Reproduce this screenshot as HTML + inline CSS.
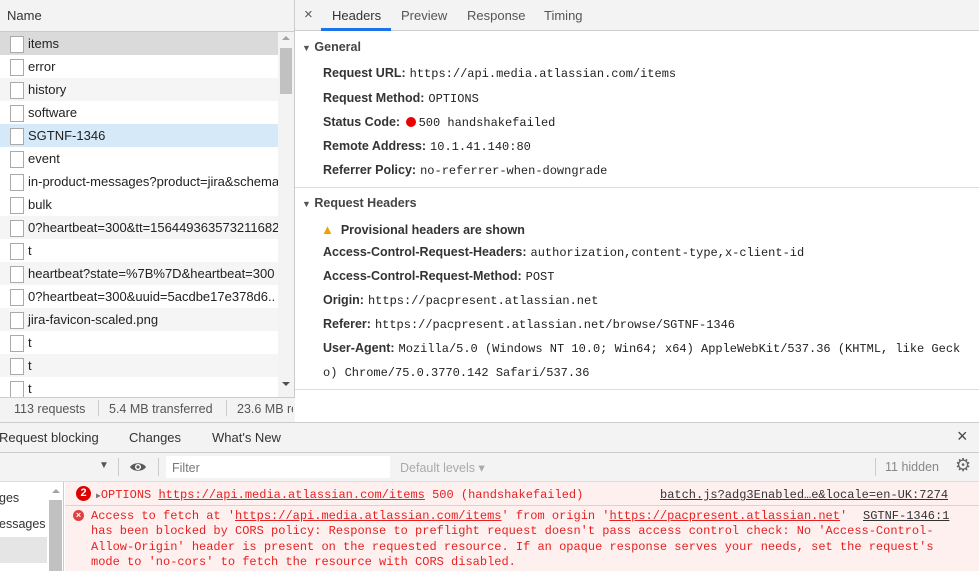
<!DOCTYPE html>
<html><head><meta charset="utf-8"><style>
*{margin:0;padding:0;box-sizing:border-box}
body{width:979px;height:571px;overflow:hidden;background:#fff;font-family:"Liberation Sans",sans-serif;font-size:12.5px;color:#333;position:relative}
.a{position:absolute;white-space:nowrap}
.mono{font-family:"Liberation Mono",monospace;font-size:12px}
.row{position:absolute;left:0;width:278px;height:23px;line-height:23px;padding-left:28px;color:#222;overflow:hidden;font-size:13px;white-space:nowrap}
.row:before{content:"";position:absolute;left:10px;top:4px;width:12px;height:15px;border:1px solid #aaa;background:#fff}
.g{background:#f5f5f5}
.k{position:absolute;left:323px;font-weight:bold;color:#333;white-space:nowrap}
.k span{font-weight:normal;font-family:"Liberation Mono",monospace;font-size:12px;color:#222;margin-left:4px}
.tab{position:absolute;top:0;height:31px;line-height:31px;color:#555;font-size:13px}
.err{color:#e52222}
.u{text-decoration:underline}
</style></head><body>
<div class="a" style="left:0;top:0;width:295px;height:32px;background:#f3f3f3;border-bottom:1px solid #ccc;border-right:1px solid #ccc"></div>
<div class="a" style="left:7px;top:8px;color:#333;font-size:13px">Name</div>
<div class="row" style="top:32px;background:#dadada">items</div>
<div class="row" style="top:55px">error</div>
<div class="row g" style="top:78px">history</div>
<div class="row" style="top:101px">software</div>
<div class="row" style="top:124px;background:#d6e9f8">SGTNF-1346</div>
<div class="row" style="top:147px">event</div>
<div class="row" style="top:170px">in-product-messages?product=jira&amp;schema</div>
<div class="row" style="top:193px">bulk</div>
<div class="row g" style="top:216px">0?heartbeat=300&amp;tt=1564493635732116826</div>
<div class="row" style="top:239px">t</div>
<div class="row g" style="top:262px">heartbeat?state=%7B%7D&amp;heartbeat=300</div>
<div class="row" style="top:285px">0?heartbeat=300&amp;uuid=5acdbe17e378d6..</div>
<div class="row g" style="top:308px">jira-favicon-scaled.png</div>
<div class="row" style="top:331px">t</div>
<div class="row g" style="top:354px">t</div>
<div class="row" style="top:377px;height:21px">t</div>
<div class="a" style="left:278px;top:32px;width:16px;height:366px;background:#f3f3f3"></div>
<div class="a" style="left:280px;top:48px;width:12px;height:46px;background:#c1c1c1"></div>
<div class="a" style="left:282px;top:36px;width:0;height:0;border:4px solid transparent;border-bottom-color:#a3a3a3;border-top:0"></div>
<div class="a" style="left:282px;top:382px;width:0;height:0;border:4px solid transparent;border-top-color:#505050;border-bottom:0"></div>
<div class="a" style="left:294px;top:0;width:1px;height:422px;background:#ccc"></div>
<div class="a" style="left:0;top:397px;width:295px;height:25px;background:#f3f3f3;border-top:1px solid #ccc"></div>
<div class="a" style="left:14px;top:402px;color:#555">113 requests</div>
<div class="a" style="left:98px;top:400px;width:1px;height:16px;background:#ccc"></div>
<div class="a" style="left:109px;top:402px;color:#555">5.4 MB transferred</div>
<div class="a" style="left:226px;top:400px;width:1px;height:16px;background:#ccc"></div>
<div class="a" style="left:237px;top:402px;color:#555;width:56px;overflow:hidden">23.6 MB resources</div>
<div class="a" style="left:295px;top:0;width:684px;height:31px;background:#f3f3f3;border-bottom:1px solid #ccc"></div>
<div class="a" style="left:304px;top:6px;font-size:15px;color:#555">×</div>
<div class="tab" style="left:332px;color:#333">Headers</div>
<div class="a" style="left:321px;top:28px;width:70px;height:3px;background:#1a73e8"></div>
<div class="tab" style="left:401px">Preview</div>
<div class="tab" style="left:467px">Response</div>
<div class="tab" style="left:544px">Timing</div>
<div class="a" style="left:302px;top:40px;font-weight:bold;color:#444"><span style="font-size:9px;color:#555">▼</span> General</div>
<div class="k" style="top:66px">Request URL:<span>https://api.media.atlassian.com/items</span></div>
<div class="k" style="top:91px">Request Method:<span>OPTIONS</span></div>
<div class="k" style="top:115px">Status Code: <i style="display:inline-block;width:10px;height:10px;border-radius:50%;background:#e00;vertical-align:-1px;margin-left:2px"></i><span style="margin-left:3px">500 handshakefailed</span></div>
<div class="k" style="top:139px">Remote Address:<span>10.1.41.140:80</span></div>
<div class="k" style="top:163px">Referrer Policy:<span>no-referrer-when-downgrade</span></div>
<div class="a" style="left:295px;top:187px;width:684px;height:1px;background:#ddd"></div>
<div class="a" style="left:302px;top:196px;font-weight:bold;color:#444"><span style="font-size:9px;color:#555">▼</span> Request Headers</div>
<div class="a" style="left:321px;top:222px;font-weight:bold;color:#333"><span style="color:#f0a000;font-size:13px">▲</span>&nbsp; Provisional headers are shown</div>
<div class="k" style="top:245px">Access-Control-Request-Headers:<span>authorization,content-type,x-client-id</span></div>
<div class="k" style="top:269px">Access-Control-Request-Method:<span>POST</span></div>
<div class="k" style="top:293px">Origin:<span>https://pacpresent.atlassian.net</span></div>
<div class="k" style="top:317px">Referer:<span>https://pacpresent.atlassian.net/browse/SGTNF-1346</span></div>
<div class="k" style="top:341px">User-Agent:<span>Mozilla/5.0 (Windows NT 10.0; Win64; x64) AppleWebKit/537.36 (KHTML, like Geck</span></div>
<div class="a mono" style="left:323px;top:366px;color:#222">o) Chrome/75.0.3770.142 Safari/537.36</div>
<div class="a" style="left:295px;top:389px;width:684px;height:1px;background:#ddd"></div>
<div class="a" style="left:0;top:422px;width:979px;height:31px;background:#f3f3f3;border-top:1px solid #ccc;border-bottom:1px solid #ccc"></div>
<div class="a" style="left:-1px;top:430px;color:#333;font-size:13px">Request blocking</div>
<div class="a" style="left:129px;top:430px;color:#333;font-size:13px">Changes</div>
<div class="a" style="left:212px;top:430px;color:#333;font-size:13px">What's New</div>
<div class="a" style="left:957px;top:426px;font-size:18px;color:#444">×</div>
<div class="a" style="left:0;top:453px;width:979px;height:29px;background:#f3f3f3;border-bottom:1px solid #ddd"></div>
<div class="a" style="left:99px;top:460px;font-size:10px;color:#555">▼</div>
<div class="a" style="left:118px;top:458px;width:1px;height:18px;background:#ccc"></div>
<svg class="a" style="left:129px;top:461px" width="18" height="12" viewBox="0 0 18 12"><path d="M1 6C4 1 14 1 17 6C14 11 4 11 1 6Z" fill="#5a5a5a"/><circle cx="9" cy="6" r="3" fill="#fff"/><circle cx="9" cy="6" r="1.6" fill="#5a5a5a"/></svg>
<div class="a" style="left:158px;top:458px;width:1px;height:18px;background:#ccc"></div>
<div class="a" style="left:166px;top:456px;width:224px;height:22px;background:#fff"></div>
<div class="a" style="left:172px;top:461px;color:#777">Filter</div>
<div class="a" style="left:400px;top:460px;color:#aaa">Default levels ▾</div>
<div class="a" style="left:875px;top:458px;width:1px;height:18px;background:#ccc"></div>
<div class="a" style="left:885px;top:460px;color:#888">11 hidden</div>
<div class="a" style="left:955px;top:455px;font-size:18px;color:#666">⚙</div>
<div class="a" style="left:0;top:482px;width:64px;height:89px;background:#fff;border-right:1px solid #ccc"></div>
<div class="a" style="left:-1px;top:491px;color:#333">ges</div>
<div class="a" style="left:-1px;top:517px;color:#333">essages</div>
<div class="a" style="left:0;top:537px;width:47px;height:26px;background:#e5e5e5"></div>
<div class="a" style="left:49px;top:500px;width:13px;height:71px;background:#c1c1c1"></div>
<div class="a" style="left:52px;top:489px;width:0;height:0;border:4px solid transparent;border-bottom-color:#a3a3a3;border-top:0"></div>
<div class="a" style="left:65px;top:482px;width:914px;height:89px;background:#fff0f0"></div>
<div class="a" style="left:65px;top:505px;width:914px;height:1px;background:#f5c8c8"></div>
<div class="a" style="left:76px;top:486px;width:15px;height:15px;border-radius:50%;background:#d00;color:#fff;font-size:11px;font-weight:bold;text-align:center;line-height:15px">2</div>
<div class="a mono err" style="left:96px;top:488px"><span style="font-size:8px;color:#777">▶</span>OPTIONS <span class="u">https://api.media.atlassian.com/items</span> 500 (handshakefailed)</div>
<div class="a mono u" style="left:660px;top:488px;color:#333">batch.js?adg3Enabled…e&amp;locale=en-UK:7274</div>
<div class="a" style="left:73px;top:510px;width:11px;height:11px;border-radius:50%;background:#e04040;color:#fff;font-size:9px;text-align:center;line-height:11px;font-weight:bold">×</div>
<div class="a mono err" style="left:91px;top:509px;line-height:15.3px">Access to fetch at '<span class="u">https://api.media.atlassian.com/items</span>' from origin '<span class="u">https://pacpresent.atlassian.net</span>'<br>has been blocked by CORS policy: Response to preflight request doesn't pass access control check: No 'Access-Control-<br>Allow-Origin' header is present on the requested resource. If an opaque response serves your needs, set the request's<br>mode to 'no-cors' to fetch the resource with CORS disabled.</div>
<div class="a mono u" style="left:863px;top:509px;color:#333">SGTNF-1346:1</div>
</body></html>
